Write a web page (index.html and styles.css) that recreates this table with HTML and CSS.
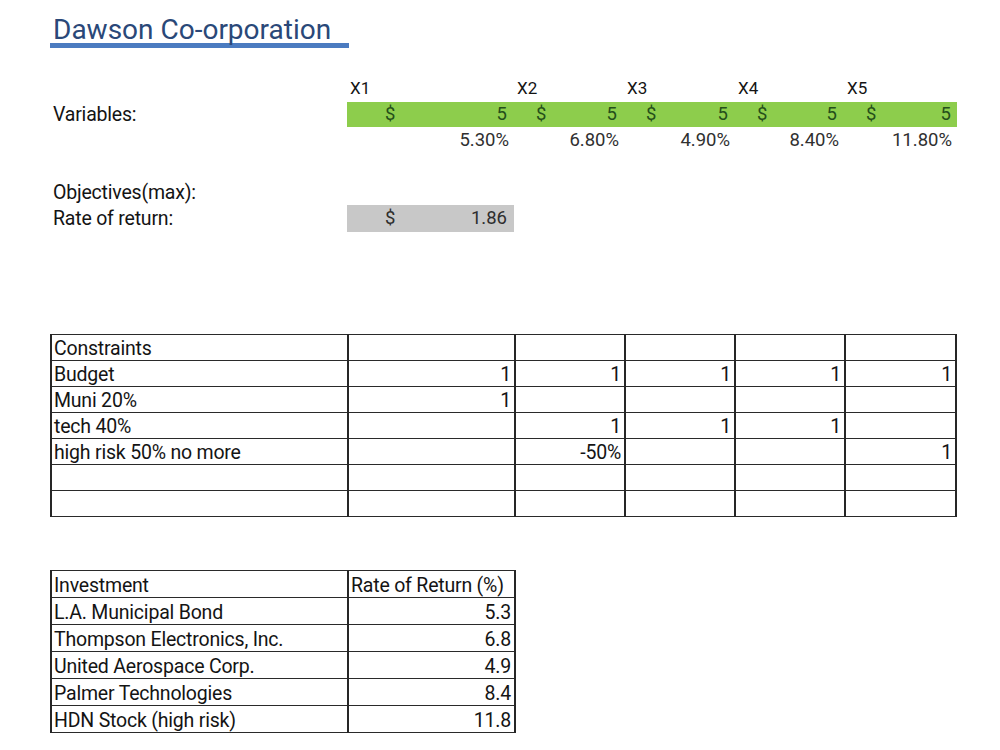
FILE: index.html
```html
<!DOCTYPE html>
<html>
<head>
<meta charset="utf-8">
<link rel="stylesheet" href="styles.css">
</head>
<body>
<div class="page">
  <h1 class="title">Dawson Co-orporation</h1>

  <div class="row xrow">
    <div></div>
    <div class="xl">X1</div>
    <div class="xl">X2</div>
    <div class="xl">X3</div>
    <div class="xl">X4</div>
    <div class="xl">X5</div>
  </div>

  <div class="row vrow">
    <div class="label">Variables:</div>
    <div class="g wide"><span>$</span><span>5</span></div>
    <div class="g"><span>$</span><span>5</span></div>
    <div class="g"><span>$</span><span>5</span></div>
    <div class="g"><span>$</span><span>5</span></div>
    <div class="g last"><span>$</span><span>5</span></div>
  </div>

  <div class="row prow">
    <div></div>
    <div class="pct">5.30%</div>
    <div class="pct">6.80%</div>
    <div class="pct">4.90%</div>
    <div class="pct">8.40%</div>
    <div class="pct">11.80%</div>
  </div>

  <div class="label obj">Objectives(max):</div>
  <div class="row rrow">
    <div class="label">Rate of return:</div>
    <div class="grey"><span>$</span><span>1.86</span></div>
  </div>

  <table class="sheet cons">
    <colgroup>
      <col class="ca"><col class="cb"><col class="cc"><col class="cc"><col class="cc"><col class="cf">
    </colgroup>
    <tr><td>Constraints</td><td></td><td></td><td></td><td></td><td></td></tr>
    <tr><td>Budget</td><td class="n">1</td><td class="n">1</td><td class="n">1</td><td class="n">1</td><td class="n">1</td></tr>
    <tr><td>Muni 20%</td><td class="n">1</td><td></td><td></td><td></td><td></td></tr>
    <tr><td>tech 40%</td><td></td><td class="n">1</td><td class="n">1</td><td class="n">1</td><td></td></tr>
    <tr><td>high risk 50% no more</td><td></td><td class="n">-50%</td><td></td><td></td><td class="n">1</td></tr>
    <tr><td></td><td></td><td></td><td></td><td></td><td></td></tr>
    <tr><td></td><td></td><td></td><td></td><td></td><td></td></tr>
  </table>

  <table class="sheet inv">
    <colgroup>
      <col class="ca"><col class="cb">
    </colgroup>
    <tr><td>Investment</td><td>Rate of Return (%)</td></tr>
    <tr><td>L.A. Municipal Bond</td><td class="n">5.3</td></tr>
    <tr><td>Thompson Electronics, Inc.</td><td class="n">6.8</td></tr>
    <tr><td>United Aerospace Corp.</td><td class="n">4.9</td></tr>
    <tr><td>Palmer Technologies</td><td class="n">8.4</td></tr>
    <tr><td>HDN Stock (high risk)</td><td class="n">11.8</td></tr>
  </table>
</div>
</body>
</html>
```

FILE: styles.css
```css
html, body {
  margin: 0;
  padding: 0;
  background: #ffffff;
}

body {
  font-family: Roboto, "Liberation Sans", sans-serif;
  color: #141414;
  width: 1000px;
  height: 750px;
  overflow: hidden;
}

.page {
  padding-left: 50px;
}

.title {
  margin: 17px 0 0 0;
  width: 296px;
  padding-left: 3px;
  font-size: 28px;
  font-weight: 400;
  line-height: 26px;
  color: #2a4878;
  border-bottom: 5px solid #4b7bc0;
}

.row {
  display: grid;
  grid-template-columns: 297px 167px 110px 111px 109px 113px;
}

.label {
  padding-left: 3px;
  font-size: 19.5px;
  line-height: 20px;
  letter-spacing: -0.2px;
}

.xrow {
  margin-top: 30px;
  font-size: 17px;
  line-height: 20px;
}

.xl {
  padding-left: 3px;
}

.vrow {
  margin-top: 4px;
  height: 25px;
  align-items: center;
}

.g {
  display: flex;
  justify-content: space-between;
  height: 25px;
  line-height: 25px;
  background: #8dcd4c;
  color: #254f1a;
  font-size: 18.5px;
  padding: 0 7px 0 22px;
}

.g.wide {
  padding-left: 38px;
}

.g.last {
  padding-right: 6px;
}

.prow {
  margin-top: 3px;
  font-size: 18.5px;
  line-height: 20px;
  color: #303030;
}

.pct {
  text-align: right;
  padding-right: 5px;
}

.obj {
  margin-top: 33px;
}

.rrow {
  margin-top: 2px;
  align-items: center;
}

.grey {
  display: flex;
  justify-content: space-between;
  height: 27px;
  line-height: 27px;
  background: #c8c8c8;
  color: #2e2e2e;
  font-size: 18.5px;
  padding: 0 7px 0 38px;
}

.sheet {
  border-collapse: collapse;
  table-layout: fixed;
  font-size: 19.5px;
  letter-spacing: -0.2px;
}

.sheet td {
  height: 24px;
  padding: 0 3px 1px 2px;
  line-height: 20px;
  vertical-align: bottom;
  border-top: 1px solid #2a2a2a;
  border-bottom: 1px solid #2a2a2a;
  border-left: 2px solid #262626;
  border-right: 2px solid #262626;
  white-space: nowrap;
  overflow: hidden;
}

.sheet td.n {
  text-align: right;
}

.ca { width: 297px; }
.cb { width: 167px; }
.cc { width: 110px; }
.cf { width: 111px; }

.cons {
  margin-top: 102px;
  width: 905px;
}

.inv {
  margin-top: 53px;
  width: 464px;
}

.inv td {
  height: 25px;
}
```
